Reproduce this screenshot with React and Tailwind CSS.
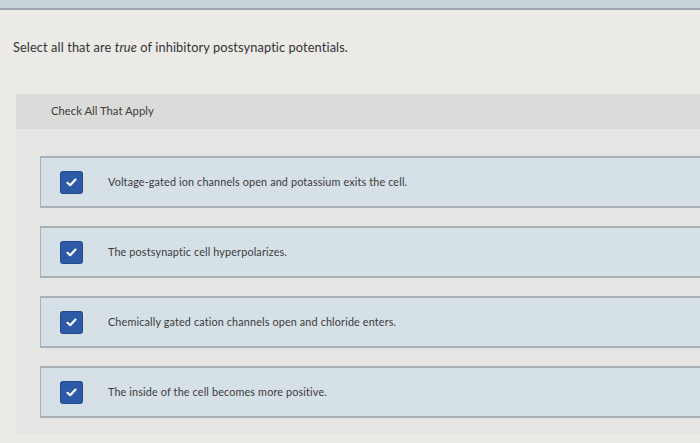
import React from "react";

const options = [
  "Voltage-gated ion channels open and potassium exits the cell.",
  "The postsynaptic cell hyperpolarizes.",
  "Chemically gated cation channels open and chloride enters.",
  "The inside of the cell becomes more positive.",
];

function Check() {
  return (
    <div className="flex h-[21px] w-[21px] shrink-0 items-center justify-center rounded-[2px] bg-[#2c5aa6] shadow-[0_0_0_1px_#244a8a]">
      <svg width="11" height="9" viewBox="0 0 11 9" fill="none">
        <path d="M1.5 4.8 L4.2 7.2 L9.5 1.6" stroke="white" strokeWidth="2.2" strokeLinecap="round" strokeLinejoin="round" />
      </svg>
    </div>
  );
}

export default function App() {
  return (
    <div className="h-[443px] w-[700px] overflow-hidden bg-[#ebeae7] font-['Lato',sans-serif] text-[#3a3a3a]">
      {/* top bar */}
      <div className="h-[10px] border-b-2 border-[#9ea7ad] bg-[#c9d3da]" />

      <p className="ml-[13px] mt-[28px] text-[12.8px] tracking-[0.1px] text-[#333]">
        Select all that are <i>true</i> of inhibitory postsynaptic potentials.
      </p>

      <div className="ml-[16px] mt-[37px] h-[340px] bg-[#e5e5e3]">
        <div className="flex h-[35px] items-center bg-[#dbdbd9] pl-[35px] text-[11.3px] text-[#3d3d3d]">
          Check All That Apply
        </div>

        <div className="flex flex-col gap-[18px] pt-[27px] pl-[24px]">
          {options.map((o) => (
            <div
              key={o}
              className="flex h-[52px] items-center border-y-2 border-l border-[#a9b1b6] bg-[#d6e0e7] pl-[20px]"
            >
              <Check />
              <span className="ml-[26px] text-[10.8px] tracking-[0.15px] text-[#3b3b3b]">{o}</span>
            </div>
          ))}
        </div>
      </div>
    </div>
  );
}
